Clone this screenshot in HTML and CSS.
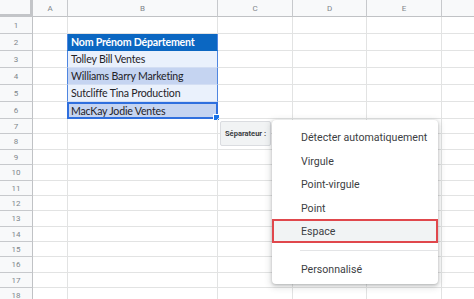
FILE: index.html
```html
<!DOCTYPE html>
<html lang="fr">
<head>
<meta charset="utf-8">
<title>Feuille</title>
<link rel="stylesheet" href="styles.css">
</head>
<body>
<div class="sheet">
  <div class="row head"><div class="c rh corner"></div><div class="c a">A</div><div class="c b">B</div><div class="c cc">C</div><div class="c d">D</div><div class="c e">E</div><div class="c f"></div></div>
  <div class="row tall"><div class="c rh">1</div><div class="c a"></div><div class="c b"></div><div class="c cc"></div><div class="c d"></div><div class="c e"></div><div class="c f"></div></div>
  <div class="row tall"><div class="c rh">2</div><div class="c a"></div><div class="c b th">Nom Prénom Département</div><div class="c cc"></div><div class="c d"></div><div class="c e"></div><div class="c f"></div></div>
  <div class="row tall"><div class="c rh">3</div><div class="c a"></div><div class="c b td light">Tolley Bill Ventes</div><div class="c cc"></div><div class="c d"></div><div class="c e"></div><div class="c f"></div></div>
  <div class="row tall"><div class="c rh">4</div><div class="c a"></div><div class="c b td dark">Williams Barry Marketing</div><div class="c cc"></div><div class="c d"></div><div class="c e"></div><div class="c f"></div></div>
  <div class="row tall"><div class="c rh">5</div><div class="c a"></div><div class="c b td light">Sutcliffe Tina Production</div><div class="c cc"></div><div class="c d"></div><div class="c e"></div><div class="c f"></div></div>
  <div class="row tall"><div class="c rh">6</div><div class="c a"></div><div class="c b td dark sel">MacKay Jodie Ventes<span class="handle"></span></div><div class="c cc"></div><div class="c d"></div><div class="c e"></div><div class="c f"></div></div>
  <div class="row r15"><div class="c rh">7</div><div class="c a"></div><div class="c b"></div><div class="c cc"></div><div class="c d"></div><div class="c e"></div><div class="c f"></div></div>
  <div class="row r16"><div class="c rh">8</div><div class="c a"></div><div class="c b"></div><div class="c cc"></div><div class="c d"></div><div class="c e"></div><div class="c f"></div></div>
  <div class="row r15"><div class="c rh">9</div><div class="c a"></div><div class="c b"></div><div class="c cc"></div><div class="c d"></div><div class="c e"></div><div class="c f"></div></div>
  <div class="row r16"><div class="c rh">10</div><div class="c a"></div><div class="c b"></div><div class="c cc"></div><div class="c d"></div><div class="c e"></div><div class="c f"></div></div>
  <div class="row r15"><div class="c rh">11</div><div class="c a"></div><div class="c b"></div><div class="c cc"></div><div class="c d"></div><div class="c e"></div><div class="c f"></div></div>
  <div class="row r15"><div class="c rh">12</div><div class="c a"></div><div class="c b"></div><div class="c cc"></div><div class="c d"></div><div class="c e"></div><div class="c f"></div></div>
  <div class="row r16"><div class="c rh">13</div><div class="c a"></div><div class="c b"></div><div class="c cc"></div><div class="c d"></div><div class="c e"></div><div class="c f"></div></div>
  <div class="row r15"><div class="c rh">14</div><div class="c a"></div><div class="c b"></div><div class="c cc"></div><div class="c d"></div><div class="c e"></div><div class="c f"></div></div>
  <div class="row r15"><div class="c rh">15</div><div class="c a"></div><div class="c b"></div><div class="c cc"></div><div class="c d"></div><div class="c e"></div><div class="c f"></div></div>
  <div class="row r16"><div class="c rh">16</div><div class="c a"></div><div class="c b"></div><div class="c cc"></div><div class="c d"></div><div class="c e"></div><div class="c f"></div></div>
  <div class="row r15"><div class="c rh">17</div><div class="c a"></div><div class="c b"></div><div class="c cc"></div><div class="c d"></div><div class="c e"></div><div class="c f"></div></div>
  <div class="row r15"><div class="c rh">18</div><div class="c a"></div><div class="c b"></div><div class="c cc"></div><div class="c d"></div><div class="c e"></div><div class="c f"></div></div>
</div>

<div class="sep-btn">Séparateur :</div>

<div class="menu">
  <div class="item">Détecter automatiquement</div>
  <div class="item">Virgule</div>
  <div class="item">Point-virgule</div>
  <div class="item">Point</div>
  <div class="item active">Espace</div>
  <div class="divider"></div>
  <div class="item">Personnalisé</div>
</div>
</body>
</html>
```

FILE: styles.css
```css
html, body {
  margin: 0;
  padding: 0;
  background: #ffffff;
  overflow: hidden;
  width: 474px;
  height: 299px;
}

.sheet {
  display: flex;
  flex-direction: column;
  font-family: Roboto, "Liberation Sans", sans-serif;
}

.row {
  display: flex;
  height: 17px;
}
.row.r15 { height: 15px; }
.row.r16 { height: 16px; }

.c {
  box-sizing: border-box;
  flex: none;
  height: 100%;
  border-right: 1px solid #e2e3e3;
  border-bottom: 1px solid #e2e3e3;
  position: relative;
}
.rh { width: 33px; }
.a { width: 35px; }
.b { width: 150px; }
.cc { width: 75px; }
.d { width: 74px; }
.e { width: 75px; }
.f { flex: 1; width: auto; border-right: none; }

.rh, .head .c {
  background: #f8f9fa;
  color: #80868b;
  font-size: 8px;
  display: flex;
  align-items: center;
  justify-content: center;
  border-color: #c7c9cc;
}
.rh { border-right: 1px solid #c0c2c5; }
.head .c { border-bottom: 1px solid #c0c2c5; }

.corner {
  border-right: 3px solid #c3c5c8 !important;
  border-bottom: 3px solid #c3c5c8 !important;
}

.td, .th {
  font-family: Lato, "Open Sans", sans-serif;
  font-size: 10.6px;
  letter-spacing: -0.2px;
  display: flex;
  align-items: center;
  padding-left: 3px;
  border-left: 1px solid #4f86e0;
  border-right: 1px solid #4f86e0;
  margin-left: -1px;
  width: 151px;
}
.th {
  background: #0b67c2;
  color: #ffffff;
  font-weight: bold;
  border-bottom: 1px solid #0b67c2;
}
.td { color: #1f2328; border-bottom: 1px solid #d3def3; }
.light { background: #eaf1fc; }
.dark { background: #c5d4f1; }
.sel {
  border: 2px solid #2f6fde;
  padding-left: 2px;
}
.handle {
  position: absolute;
  right: -4px;
  bottom: -4px;
  width: 5px;
  height: 5px;
  background: #1a73e8;
  border: 1px solid #ffffff;
}

.sep-btn {
  position: absolute;
  left: 220px;
  top: 121px;
  width: 51px;
  height: 25px;
  box-sizing: border-box;
  background: #f1f3f4;
  border: 1px solid #dadce0;
  border-radius: 2px;
  font-family: Roboto, "Liberation Sans", sans-serif;
  font-size: 7.5px;
  font-weight: bold;
  color: #3c4043;
  display: flex;
  align-items: center;
  padding-left: 4px;
}

.menu {
  position: absolute;
  left: 272px;
  top: 120px;
  width: 166px;
  height: 164px;
  box-sizing: border-box;
  background: #ffffff;
  border-radius: 4px;
  box-shadow: 0 1px 3px rgba(60, 64, 67, 0.3), 0 2px 6px 2px rgba(60, 64, 67, 0.15);
  padding-top: 6px;
  display: flex;
  flex-direction: column;
  font-family: Roboto, "Liberation Sans", sans-serif;
  font-size: 10.6px;
  color: #3c4043;
}
.item {
  height: 23.5px;
  display: flex;
  align-items: center;
  padding-left: 29px;
  box-sizing: border-box;
}
.item.active {
  background: #f1f3f4;
  border: 2px solid #e0474c;
  padding-left: 27px;
  height: 24px;
  margin-top: -1px;
}
.divider {
  height: 1px;
  background: #e3e4e6;
  margin: 7px 0 7px 28px;
}
```
